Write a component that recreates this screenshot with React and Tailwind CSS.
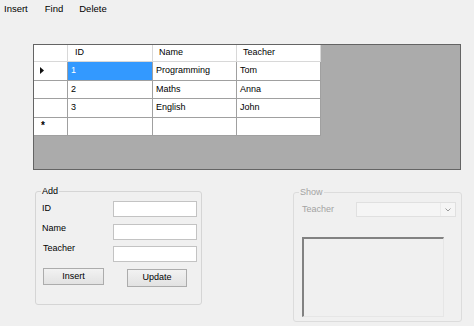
const rows = [
  { id: "1", name: "Programming", teacher: "Tom", current: true },
  { id: "2", name: "Maths", teacher: "Anna" },
  { id: "3", name: "English", teacher: "John" },
];

const cell = "h-[18.5px] border-r border-b border-[#a0a0a0] bg-white flex items-center pl-[3px]";
const head = "h-[17px] border-r border-b border-[#d8d8d8] bg-white flex items-center";

const DataGrid = () => (
  <div className="mt-[26px] ml-[33px] w-[428px] h-[126px] border border-[#646464] bg-[#ababab]">
    <div className="grid grid-cols-[34px_85px_84px_84px] w-[287px]">
      <div className={head}></div>
      <div className={`${head} pl-[7px]`}>ID</div>
      <div className={`${head} pl-[6px]`}>Name</div>
      <div className={`${head} pl-[6px]`}>Teacher</div>

      {rows.map((r) => (
        <div key={r.id} className="contents">
          <div className="h-[18.5px] border-r border-b border-[#a0a0a0] bg-white flex items-center pl-[6px]">
            {r.current && (
              <svg width="4" height="7" viewBox="0 0 4 7">
                <polygon points="0,0 4,3.5 0,7" fill="#111" />
              </svg>
            )}
          </div>
          <div className={r.current ? "h-[18.5px] border-r border-b border-[#a0a0a0] bg-[#3399ff] text-white flex items-center pl-[3px]" : cell}>
            {r.id}
          </div>
          <div className={cell}>{r.name}</div>
          <div className={cell}>{r.teacher}</div>
        </div>
      ))}

      <div className="h-[18.5px] border-r border-b border-[#a0a0a0] bg-white flex items-center pl-[7px] text-[10px] font-bold leading-none">
        *
      </div>
      <div className={cell}></div>
      <div className={cell}></div>
      <div className={cell}></div>
    </div>
  </div>
);

const TextBox = () => <div className="w-[84px] h-[16px] border border-[#c3c3c3] bg-white"></div>;

const Button = ({ label, className }) => (
  <div className={`border border-[#acacac] bg-linear-to-b from-[#f2f2f2] to-[#e2e2e2] flex items-center justify-center ${className}`}>
    {label}
  </div>
);

export default function App() {
  return (
    <div
      className="w-[474px] h-[326px] bg-[#f0f0f0] overflow-hidden text-[9px] text-black"
      style={{ fontFamily: '"Liberation Sans", Arial, sans-serif' }}
    >
      {/* menu strip */}
      <div className="flex items-center h-[18px] pl-[4px] text-[9.5px]">
        <span>Insert</span>
        <span className="ml-[17px]">Find</span>
        <span className="ml-[16px]">Delete</span>
      </div>

      <DataGrid />

      <div className="flex items-start ml-[35px] mt-[15.5px]">
        {/* Add group */}
        <fieldset className="w-[167px] h-[119.5px] border border-[#d5d5d5] rounded-[3px]">
          <legend className="ml-[5px] px-[1px] leading-[11px]">Add</legend>
          <div className="flex pl-[6px]">
            <div className="w-[71px] mt-[6px] flex flex-col gap-[9px] leading-[11px]">
              <span>ID</span>
              <span>Name</span>
              <span className="pl-[1px]">Teacher</span>
            </div>
            <div className="mt-[4.5px] flex flex-col gap-[6.5px]">
              <TextBox />
              <TextBox />
              <TextBox />
            </div>
          </div>
          <div className="flex items-start pl-[7px] mt-[6px]">
            <Button label="Insert" className="w-[61px] h-[17px]" />
            <Button label="Update" className="w-[60px] h-[18px] ml-[23px] mt-[1px]" />
          </div>
        </fieldset>

        {/* Show group (disabled) */}
        <fieldset className="ml-[91px] mt-[1px] w-[169px] h-[135.5px] border border-[#dcdcdc] rounded-[3px] text-[#a3a3a3]">
          <legend className="ml-[5px] px-[1px] leading-[11px]">Show</legend>
          <div className="flex items-center pl-[8px] mt-[4.5px] h-[15px]">
            <span className="w-[54px]">Teacher</span>
            <div className="w-[100px] h-[15px] border border-[#e0e0e0] bg-[#f5f5f5] flex items-center justify-end">
              <div className="h-full w-[15px] border-l border-[#ebebeb] flex items-center justify-center">
                <svg width="6" height="4" viewBox="0 0 6 4">
                  <polyline points="0.5,0.5 3,3 5.5,0.5" fill="none" stroke="#9a9a9a" strokeWidth="1" />
                </svg>
              </div>
            </div>
          </div>
          <div className="ml-[8px] mt-[20px] w-[142px] h-[80px] border-l-2 border-t-2 border-[#828282] border-r border-b border-r-[#e6e6e6] border-b-[#e6e6e6] bg-[#f0f0f0]"></div>
        </fieldset>
      </div>
    </div>
  );
}
